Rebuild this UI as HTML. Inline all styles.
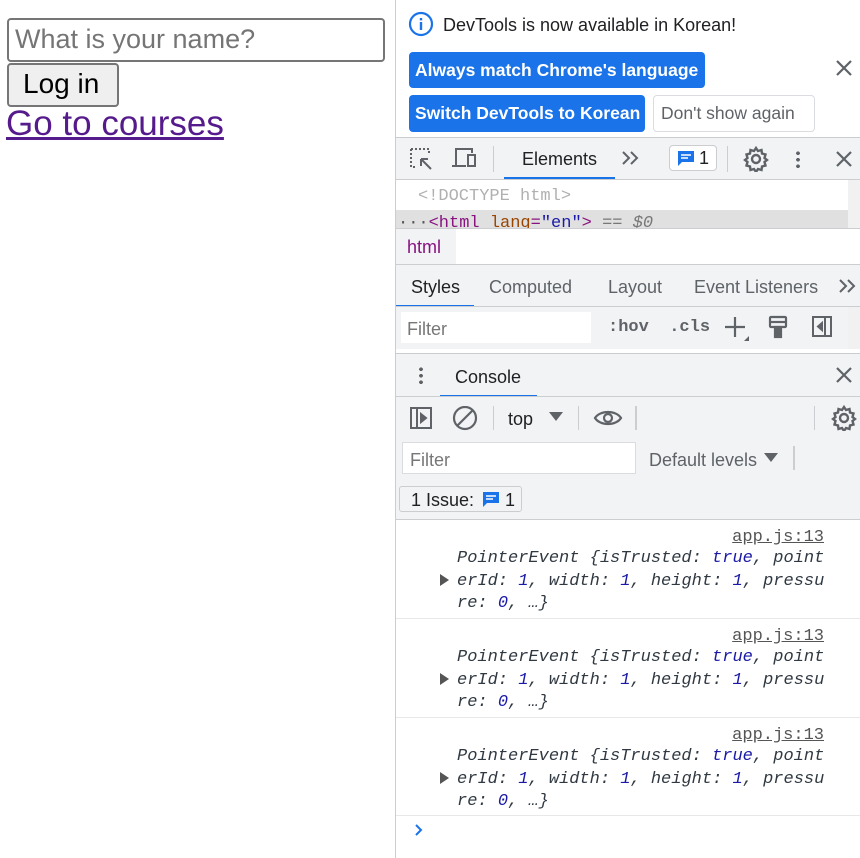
<!DOCTYPE html>
<html><head><style>
*{box-sizing:border-box;margin:0;padding:0}
body{width:860px;height:858px;position:relative;background:#fff;font-family:"Liberation Sans",sans-serif;overflow:hidden}
.a{position:absolute;white-space:nowrap}
.ui{font-family:"Liberation Sans",sans-serif;font-size:18px;color:#202124}
.mono{font-family:"Liberation Mono","DejaVu Sans Mono",monospace;font-size:17px}
.gray{background:#f1f3f4}
.line{background:#cbcdd1;height:1px}
.msg{left:396px;width:464px;border-bottom:1px solid #e8e8e8}
.msg .src{position:absolute;right:36px;top:8px;color:#555;text-decoration:underline;font-size:17px}
.msg .code{position:absolute;top:28px;font-style:italic;color:#303942;line-height:22.5px;width:380px;left:61px}
.k{color:#1a1aa6}
.tri{position:absolute;left:44px;top:54px;width:0;height:0;border-left:9px solid #555;border-top:6px solid transparent;border-bottom:6px solid transparent}
</style></head><body>
<!-- left page -->
<div class="a" style="left:7px;top:18px;width:378px;height:44px;border:2px solid #767676;border-radius:4px"></div>
<div class="a" style="left:15px;top:24px;font-size:27px;color:#757575">What is your name?</div>
<div class="a" style="left:7px;top:63px;width:112px;height:44px;border:2px solid #767676;border-radius:4px;background:#efefef"></div>
<div class="a" style="left:23px;top:68px;font-size:28px;color:#000">Log in</div>
<div class="a" style="left:6px;top:104px;font-size:35px;color:#551a8b;text-decoration:underline">Go to courses</div>
<div class="a" style="left:395px;top:0;width:1px;height:858px;background:#cbcdd1"></div>

<!-- infobar -->
<svg class="a" style="left:408px;top:11px" width="28" height="28" viewBox="0 0 28 28"><circle cx="13" cy="13" r="11" fill="none" stroke="#1a73e8" stroke-width="2.2"/><rect x="11.8" y="11" width="2.4" height="8" fill="#1a73e8"/><rect x="11.8" y="7" width="2.4" height="2.4" fill="#1a73e8"/></svg>
<div class="a ui" style="left:443px;top:15px">DevTools is now available in Korean!</div>
<div class="a ui" style="left:409px;top:52px;width:296px;height:36px;background:#1a73e8;border-radius:4px;color:#fff;font-weight:bold;line-height:36px;padding-left:6px;font-size:17.5px">Always match Chrome's language</div>
<svg class="a" style="left:835px;top:59px" width="18" height="18" viewBox="0 0 18 18" stroke="#5f6368" stroke-width="2.2"><path d="M2 2l14 14M16 2L2 16"/></svg>
<div class="a ui" style="left:409px;top:95px;width:236px;height:37px;background:#1a73e8;border-radius:4px;color:#fff;font-weight:bold;line-height:37px;padding-left:6px;font-size:17.5px">Switch DevTools to Korean</div>
<div class="a ui" style="left:653px;top:95px;width:162px;height:37px;border:1px solid #dadce0;border-radius:4px;line-height:35px;padding-left:7px;color:#5f6368;font-size:17.5px">Don't show again</div>

<!-- toolbar -->
<div class="a line" style="left:396px;top:137px;width:464px"></div>
<div class="a gray" style="left:396px;top:138px;width:464px;height:41px"></div>
<svg class="a" style="left:409px;top:147px" width="26" height="24" viewBox="0 0 26 24" fill="none" stroke="#5f6368" stroke-width="2"><path d="M2 2h18v6M2 2v18h6" stroke-dasharray="2 2"/><path d="M12 12l10 10M12 12v7M12 12h7"/></svg>
<svg class="a" style="left:451px;top:147px" width="28" height="22" viewBox="0 0 28 22" fill="none" stroke="#5f6368" stroke-width="2"><path d="M5 18V2h16v4M1 19h14"/><rect x="17" y="8" width="7" height="11"/></svg>
<div class="a" style="left:493px;top:146px;width:1px;height:26px;background:#cbcdd1"></div>
<div class="a ui" style="left:522px;top:149px">Elements</div>
<div class="a" style="left:504px;top:177px;width:111px;height:2px;background:#1a73e8"></div>
<svg class="a" style="left:621px;top:150px" width="20" height="16" viewBox="0 0 20 16" fill="none" stroke="#5f6368" stroke-width="2"><path d="M2 2l6 6-6 6M10 2l6 6-6 6"/></svg>
<div class="a" style="left:669px;top:145px;width:48px;height:26px;border:1px solid #cbcdd1;border-radius:4px;background:#fff"></div>
<svg class="a" style="left:677px;top:150px" width="18" height="17" viewBox="0 0 18 17"><path d="M1 1h16v11H5l-4 4z" fill="#1a73e8"/><path d="M4 5h10M4 8h7" stroke="#fff" stroke-width="1.5"/></svg>
<div class="a ui" style="left:699px;top:148px">1</div>
<div class="a" style="left:727px;top:146px;width:1px;height:26px;background:#cbcdd1"></div>
<svg class="a" style="left:743px;top:146px" width="26" height="26" viewBox="0 0 26 26" fill="none" stroke="#5f6368" stroke-width="2.4"><circle cx="13" cy="13" r="4"/><path d="M13 2l2 3 3.5-1 .5 3.5 3.5 1-1 3.5 2.5 2-2.5 2 1 3.5-3.5 1-.5 3.5-3.5-1-2 3-2-3-3.5 1-.5-3.5-3.5-1 1-3.5-2.5-2 2.5-2-1-3.5 3.5-1 .5-3.5 3.5 1z"/></svg>
<div class="a" style="left:796px;top:150px;width:4px;height:18px;background:radial-gradient(circle,#5f6368 1.8px,transparent 2px) 0 0/4px 6.5px"></div>
<svg class="a" style="left:835px;top:150px" width="18" height="18" viewBox="0 0 18 18" stroke="#5f6368" stroke-width="2.2"><path d="M2 2l14 14M16 2L2 16"/></svg>
<div class="a line" style="left:396px;top:179px;width:464px"></div>

<!-- DOM -->
<div class="a mono" style="left:418px;top:187px;color:#b0b0b0">&lt;!DOCTYPE html&gt;</div>
<div class="a" style="left:396px;top:210px;width:452px;height:18px;background:#e0e0e0;overflow:hidden"><div class="a mono" style="left:2px;top:4px;color:#881280;white-space:nowrap"><span style="color:#555">···</span>&lt;html <span style="color:#994500">lang</span>=<span style="color:#1a1aa6">"en"</span>&gt; <span style="color:#777;font-style:italic">== $0</span></div></div>
<div class="a" style="left:848px;top:180px;width:12px;height:48px;background:#f1f1f1"></div>
<div class="a line" style="left:396px;top:228px;width:464px"></div>
<div class="a" style="left:396px;top:229px;width:60px;height:35px;background:#f1f3f4"></div>
<div class="a ui" style="left:407px;top:237px;color:#881280">html</div>
<div class="a line" style="left:396px;top:264px;width:464px"></div>

<!-- styles -->
<div class="a gray" style="left:396px;top:265px;width:464px;height:41px"></div>
<div class="a ui" style="left:411px;top:277px">Styles</div>
<div class="a ui" style="left:489px;top:277px;color:#5f6368">Computed</div>
<div class="a ui" style="left:608px;top:277px;color:#5f6368">Layout</div>
<div class="a ui" style="left:694px;top:277px;color:#5f6368">Event Listeners</div>
<svg class="a" style="left:838px;top:278px" width="20" height="16" viewBox="0 0 20 16" fill="none" stroke="#5f6368" stroke-width="2"><path d="M2 2l6 6-6 6M10 2l6 6-6 6"/></svg>
<div class="a" style="left:396px;top:305px;width:78px;height:2px;background:#1a73e8"></div>
<div class="a line" style="left:396px;top:306px;width:464px"></div>
<div class="a gray" style="left:396px;top:307px;width:464px;height:42px"></div>
<div class="a" style="left:401px;top:312px;width:190px;height:31px;background:#fff"></div>
<div class="a ui" style="left:407px;top:319px;color:#777">Filter</div>
<div class="a mono" style="left:608px;top:318px;font-weight:bold;color:#5f6368">:hov&nbsp; .cls</div>
<svg class="a" style="left:724px;top:316px" width="26" height="26" viewBox="0 0 26 26"><path d="M11 1v20M1 11h20" stroke="#5f6368" stroke-width="2.2"/><path d="M25 20v5h-5z" fill="#5f6368"/></svg>
<svg class="a" style="left:767px;top:315px" width="22" height="24" viewBox="0 0 22 24" fill="none" stroke="#5f6368" stroke-width="2.2"><rect x="3" y="2" width="16" height="10" rx="1"/><path d="M3 7h16"/><rect x="8" y="12" width="6" height="10" fill="#5f6368"/></svg>
<svg class="a" style="left:811px;top:315px" width="22" height="24" viewBox="0 0 22 24" fill="none" stroke="#5f6368" stroke-width="2"><rect x="2" y="2" width="18" height="19"/><path d="M14 2v19"/><path d="M11 8l-4 3.5 4 3.5z" fill="#5f6368"/></svg>
<div class="a" style="left:848px;top:307px;width:12px;height:42px;background:#f1f1f1"></div>
<div class="a" style="left:396px;top:349px;width:464px;height:5px;background:#fff"></div>
<div class="a line" style="left:396px;top:353px;width:464px"></div>

<!-- console drawer -->
<div class="a gray" style="left:396px;top:354px;width:464px;height:42px"></div>
<div class="a" style="left:419px;top:366px;width:4px;height:18px;background:radial-gradient(circle,#5f6368 1.8px,transparent 2px) 0 0/4px 6.5px"></div>
<div class="a ui" style="left:455px;top:367px">Console</div>
<div class="a" style="left:440px;top:395px;width:97px;height:2px;background:#1a73e8"></div>
<svg class="a" style="left:835px;top:366px" width="18" height="18" viewBox="0 0 18 18" stroke="#5f6368" stroke-width="2.2"><path d="M2 2l14 14M16 2L2 16"/></svg>
<div class="a line" style="left:396px;top:396px;width:464px"></div>
<div class="a gray" style="left:396px;top:397px;width:464px;height:122px"></div>
<svg class="a" style="left:409px;top:406px" width="24" height="24" viewBox="0 0 24 24" fill="none" stroke="#5f6368" stroke-width="2"><rect x="2" y="2" width="20" height="20"/><path d="M8 2v20"/><path d="M12 8l5 4-5 4z" fill="#5f6368"/></svg>
<svg class="a" style="left:452px;top:406px" width="26" height="26" viewBox="0 0 26 26" fill="none" stroke="#5f6368" stroke-width="2.2"><circle cx="13" cy="12" r="11"/><path d="M5 20L21 4"/></svg>
<div class="a" style="left:493px;top:406px;width:1px;height:24px;background:#cbcdd1"></div>
<div class="a ui" style="left:508px;top:409px">top</div>
<svg class="a" style="left:549px;top:412px" width="14" height="10" viewBox="0 0 14 10"><path d="M0 0h14L7 9z" fill="#5f6368"/></svg>
<div class="a" style="left:578px;top:406px;width:1px;height:24px;background:#cbcdd1"></div>
<svg class="a" style="left:593px;top:407px" width="30" height="22" viewBox="0 0 30 22" fill="none" stroke="#5f6368" stroke-width="2.2"><path d="M2 11C7 3 23 3 28 11C23 19 7 19 2 11z"/><circle cx="15" cy="11" r="4"/></svg>
<div class="a" style="left:635px;top:406px;width:2px;height:24px;background:#cbcdd1"></div>
<div class="a" style="left:814px;top:406px;width:1px;height:24px;background:#cbcdd1"></div>
<svg class="a" style="left:831px;top:405px" width="26" height="26" viewBox="0 0 26 26" fill="none" stroke="#5f6368" stroke-width="2.4"><circle cx="13" cy="13" r="4"/><path d="M13 2l2 3 3.5-1 .5 3.5 3.5 1-1 3.5 2.5 2-2.5 2 1 3.5-3.5 1-.5 3.5-3.5-1-2 3-2-3-3.5 1-.5-3.5-3.5-1 1-3.5-2.5-2 2.5-2-1-3.5 3.5-1 .5-3.5 3.5 1z"/></svg>
<div class="a" style="left:402px;top:442px;width:234px;height:32px;background:#fff;border:1px solid #dadce0"></div>
<div class="a ui" style="left:410px;top:450px;color:#777">Filter</div>
<div class="a ui" style="left:649px;top:450px;color:#5f6368">Default levels</div>
<svg class="a" style="left:764px;top:453px" width="14" height="10" viewBox="0 0 14 10"><path d="M0 0h14L7 9z" fill="#5f6368"/></svg>
<div class="a" style="left:793px;top:446px;width:2px;height:24px;background:#cbcdd1"></div>
<div class="a" style="left:399px;top:486px;width:123px;height:26px;border:1px solid #cbcdd1;border-radius:3px"></div>
<div class="a ui" style="left:411px;top:490px">1 Issue:</div>
<svg class="a" style="left:482px;top:491px" width="18" height="17" viewBox="0 0 18 17"><path d="M1 1h16v11H5l-4 4z" fill="#1a73e8"/><path d="M4 5h10M4 8h7" stroke="#fff" stroke-width="1.5"/></svg>
<div class="a ui" style="left:505px;top:490px">1</div>
<div class="a line" style="left:396px;top:519px;width:464px"></div>

<!-- messages -->
<div class="a msg mono" style="top:520px;height:99px"><div class="src">app.js:13</div><div class="code">PointerEvent {isTrusted: <span class="k">true</span>, point<br>erId: <span class="k">1</span>, width: <span class="k">1</span>, height: <span class="k">1</span>, pressu<br>re: <span class="k">0</span>, …}</div><div class="tri"></div></div>
<div class="a msg mono" style="top:619px;height:99px"><div class="src">app.js:13</div><div class="code">PointerEvent {isTrusted: <span class="k">true</span>, point<br>erId: <span class="k">1</span>, width: <span class="k">1</span>, height: <span class="k">1</span>, pressu<br>re: <span class="k">0</span>, …}</div><div class="tri"></div></div>
<div class="a msg mono" style="top:718px;height:98px"><div class="src">app.js:13</div><div class="code">PointerEvent {isTrusted: <span class="k">true</span>, point<br>erId: <span class="k">1</span>, width: <span class="k">1</span>, height: <span class="k">1</span>, pressu<br>re: <span class="k">0</span>, …}</div><div class="tri"></div></div>
<svg class="a" style="left:414px;top:823px" width="10" height="14" viewBox="0 0 10 14" fill="none" stroke="#1a73e8" stroke-width="2"><path d="M2 2l5 5-5 5"/></svg>
</body></html>
